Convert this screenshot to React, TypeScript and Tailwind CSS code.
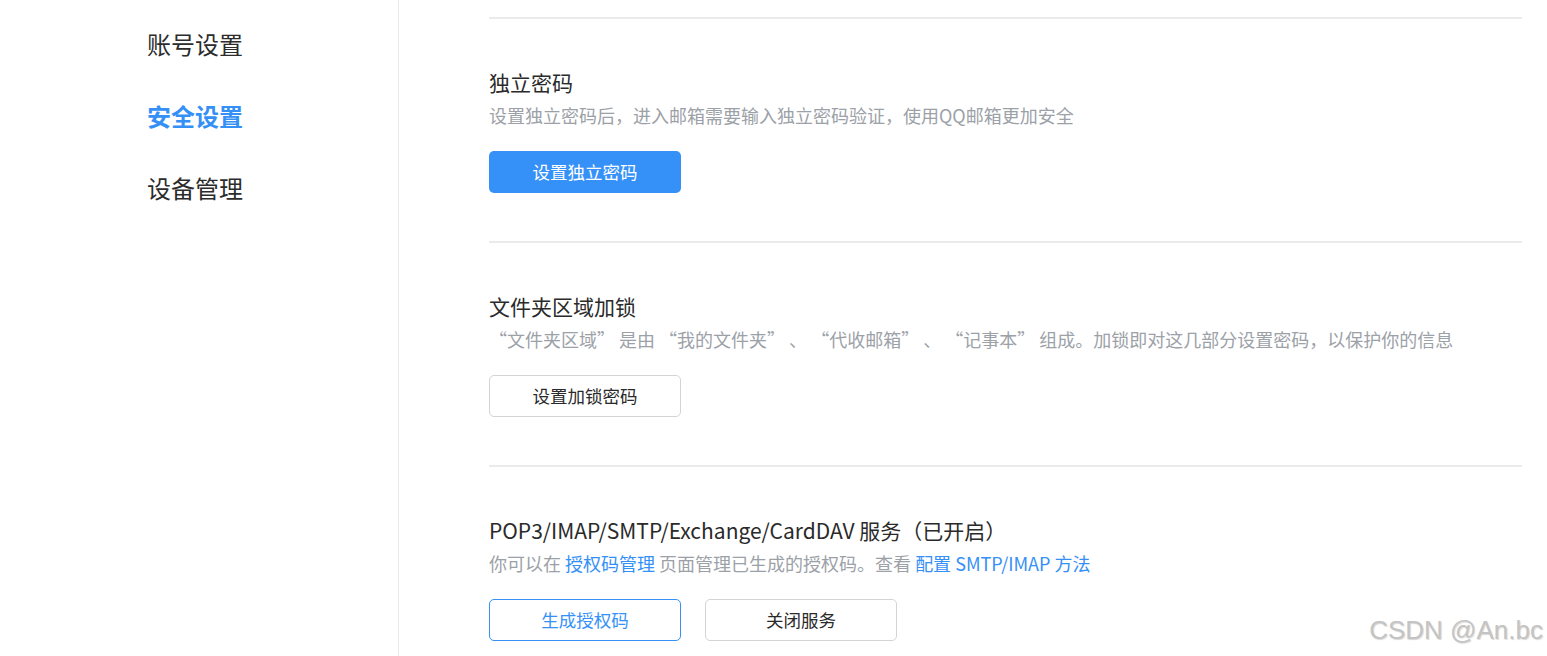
const FONT = { fontFamily: '"Noto Sans CJK SC", "Noto Sans", sans-serif' };

const Divider = () => <div className="h-[2px] bg-[#ebebee]" />;

const Section = ({
  title,
  desc,
  children,
}: {
  title: string;
  desc: React.ReactNode;
  children: React.ReactNode;
}) => (
  <div className="pt-[50px] pb-[48px]">
    <div className="text-[21px] leading-[26px] text-[#2a2a2a]">{title}</div>
    <div className="mt-[8px] text-[18px] leading-[24px] text-[#9ca1a8]">{desc}</div>
    <div className="mt-[24px] flex gap-[24px]">{children}</div>
  </div>
);

const App = () => {
  const menu = ["账号设置", "安全设置", "设备管理"];

  return (
    <div className="relative flex h-[656px] overflow-hidden bg-white" style={FONT}>
      {/* left menu */}
      <div className="w-[399px] shrink-0 border-r border-[#e8e8ea] pl-[147px] pt-[27px]">
        {menu.map((m, i) => (
          <div
            key={m}
            className={
              "h-[72px] text-[24px] leading-[34px] " +
              (i === 1 ? "font-bold text-[#3590f6]" : "text-[#2c2c2c]")
            }
          >
            {m}
          </div>
        ))}
      </div>

      {/* main content */}
      <div className="flex-1 pl-[90px] pr-[25px]">
        <div className="mt-[17px]" />
        <Divider />

        <Section title="独立密码" desc="设置独立密码后，进入邮箱需要输入独立密码验证，使用QQ邮箱更加安全">
          <button className="h-[42px] w-[192px] rounded-[5px] bg-[#3591f7] text-[17.5px] text-white">
            设置独立密码
          </button>
        </Section>
        <Divider />

        <Section
          title="文件夹区域加锁"
          desc="“文件夹区域” 是由 “我的文件夹” 、 “代收邮箱” 、 “记事本” 组成。加锁即对这几部分设置密码，以保护你的信息"
        >
          <button className="h-[42px] w-[192px] rounded-[5px] border border-[#d4d4d6] bg-white text-[17.5px] text-[#2a2a2a]">
            设置加锁密码
          </button>
        </Section>
        <Divider />

        <Section
          title="POP3/IMAP/SMTP/Exchange/CardDAV 服务（已开启）"
          desc={
            <>
              你可以在 <span className="text-[#3590f6]">授权码管理</span> 页面管理已生成的授权码。查看{" "}
              <span className="text-[#3590f6]">配置 SMTP/IMAP 方法</span>
            </>
          }
        >
          <button className="h-[42px] w-[192px] rounded-[5px] border border-[#3591f7] bg-white text-[17.5px] text-[#3591f7]">
            生成授权码
          </button>
          <button className="h-[42px] w-[192px] rounded-[5px] border border-[#d4d4d6] bg-white text-[17.5px] text-[#2a2a2a]">
            关闭服务
          </button>
        </Section>
      </div>

      {/* watermark */}
      <div
        className="absolute bottom-[10px] right-[4px] text-[26px] leading-[32px] text-[#c4c4c4] [text-shadow:1px_1px_1px_#d8d8d8]"
        style={{ fontFamily: '"Liberation Sans", sans-serif' }}
      >
        CSDN @An.bc
      </div>
    </div>
  );
};

export default App;
